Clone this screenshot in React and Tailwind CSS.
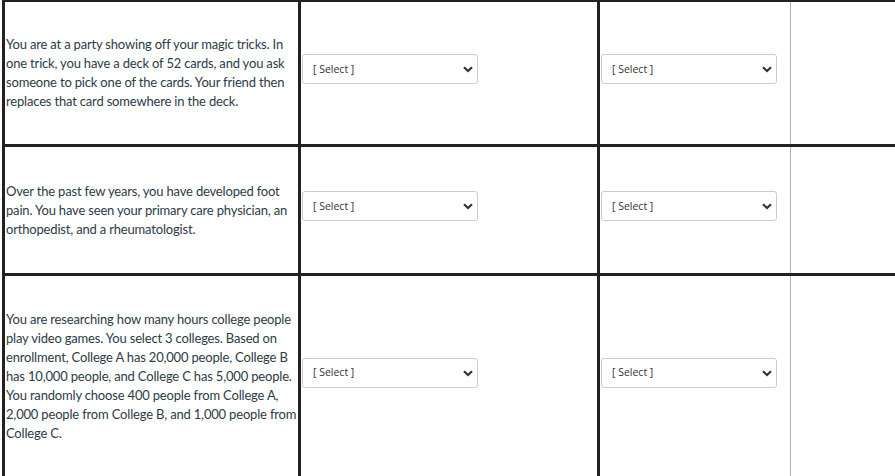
const rows = [
  {
    h: "h-[142px]",
    top: "border-t-2",
    text: "You are at a party showing off your magic tricks. In one trick, you have a deck of 52 cards, and you ask someone to pick one of the cards. Your friend then replaces that card somewhere in the deck.",
  },
  {
    h: "h-[126px]",
    top: "border-t-[3px]",
    text: "Over the past few years, you have developed foot pain. You have seen your primary care physician, an orthopedist, and a rheumatologist.",
  },
  {
    h: "h-[201px]",
    top: "border-t-[3px]",
    text: "You are researching how many hours college people play video games. You select 3 colleges. Based on enrollment, College A has 20,000 people, College B has 10,000 people, and College C has 5,000 people. You randomly choose 400 people from College A, 2,000 people from College B, and 1,000 people from College C.",
  },
];

function SelectBox() {
  return (
    <div className="relative w-[176px] h-[30px] mb-2">
      <select
        defaultValue=""
        className="appearance-none w-full h-full bg-white border border-[#cccccc] rounded-[3px] pl-[10px] pr-6 pt-px text-[10.5px] text-[#333333] font-['Open_Sans',sans-serif] outline-none"
      >
        <option value="">[ Select ]</option>
      </select>
      <svg
        className="absolute right-[5px] top-[12px] pointer-events-none"
        width="10"
        height="7"
        viewBox="0 0 10 7"
      >
        <path d="M1 1.2 L5 5 L9 1.2" fill="none" stroke="#333" strokeWidth="2.2" />
      </svg>
    </div>
  );
}

export default function App() {
  return (
    <div className="w-[895px] h-[476px] overflow-hidden bg-white pl-[2px] font-['Lato',sans-serif]">
      {rows.map((row, i) => (
        <div key={i} className={`flex w-[1000px] ${row.top} border-[#222222]`}>
          <div className={`${row.h} w-[296px] shrink-0 border-l-[3px] border-[#222222] flex items-center pl-px`}>
            <p className="text-[13px] leading-[19px] tracking-[-0.18px] text-[#2d3b45]">{row.text}</p>
          </div>
          <div className={`${row.h} w-[299px] shrink-0 border-l-[3px] border-[#222222] flex items-center p-px`}>
            <SelectBox />
          </div>
          <div className={`${row.h} w-[193px] shrink-0 border-l-[3px] border-[#222222] flex items-center p-px`}>
            <SelectBox />
          </div>
          <div className={`${row.h} flex-1 border-l border-[#b3b3b3]`} />
        </div>
      ))}
    </div>
  );
}
